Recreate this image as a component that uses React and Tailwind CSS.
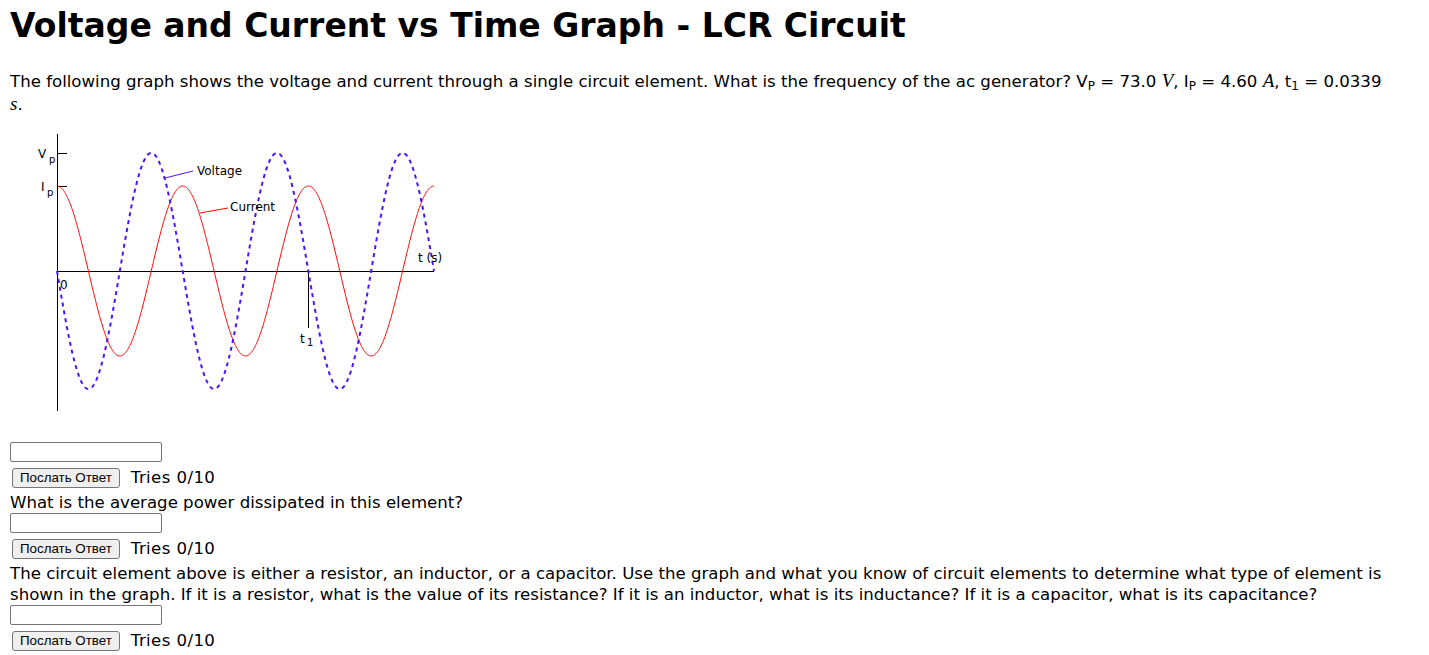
import React from "react";

const T = 125.67;
const X0 = 57;
const Y0 = 270;

function wave(fn, x1, x2) {
  const pts = [];
  for (let x = x1; x <= x2 + 0.01; x += 0.5) {
    pts.push(`${x.toFixed(1)},${fn(x).toFixed(2)}`);
  }
  return "M" + pts.join(" L");
}

const current = wave((x) => Y0 - 85 * Math.cos((2 * Math.PI * (x - X0)) / T), X0, 434);
const voltage = wave((x) => Y0 + 118 * Math.sin((2 * Math.PI * (x - X0)) / T), X0, 434);

function Graph() {
  return (
    <svg width="420" height="290" className="block ml-[20px] mt-[10px]" style={{ fontFamily: "'DejaVu Sans', sans-serif" }}>
      <g transform="translate(-30,-125)">
        {/* axes */}
        <g stroke="#000" strokeWidth="1" shapeRendering="crispEdges">
          <line x1="57.5" y1="133" x2="57.5" y2="410" />
          <line x1="57" y1="270.5" x2="434" y2="270.5" />
          <line x1="57" y1="152.5" x2="67" y2="152.5" />
          <line x1="57" y1="185.5" x2="67" y2="185.5" />
          <line x1="308.5" y1="270" x2="308.5" y2="327" />
        </g>

        {/* curves */}
        <path d={current} fill="none" stroke="#ff0000" strokeWidth="1" />
        <path d={voltage} fill="none" stroke="#4a14ff" strokeWidth="2" strokeDasharray="4 4" />

        {/* leaders */}
        <line x1="165" y1="177" x2="193" y2="170" stroke="#4a14ff" strokeWidth="1" />
        <line x1="200" y1="212" x2="228" y2="207" stroke="#ff0000" strokeWidth="1" />

        {/* labels */}
        <text x="197" y="174" fontSize="12" fill="#000">Voltage</text>
        <text x="230" y="210" fontSize="12" fill="#000">Current</text>
        <text x="418" y="261" fontSize="12" fill="#000">t (s)</text>
        <text x="60" y="288" fontSize="12" fill="#000">0</text>
        <text x="38" y="157" fontSize="12" fill="#000">V</text>
        <text x="49" y="162" fontSize="10" fill="#000">p</text>
        <text x="41" y="190" fontSize="12" fill="#000">I</text>
        <text x="47" y="195" fontSize="10" fill="#000">p</text>
        <text x="300" y="342" fontSize="12" fill="#000">t</text>
        <text x="307" y="345" fontSize="10" fill="#000">1</text>
      </g>
    </svg>
  );
}

function Answer() {
  return (
    <div className="flex items-center h-[20px] mt-[6px]">
      <button className="ml-[2px] h-[20px] px-[7px] bg-[#efefef] border border-[#767676] rounded-[3px] text-[13.33px] leading-none text-black" style={{ fontFamily: "'Liberation Sans', Arial, sans-serif" }}>
        Послать Ответ
      </button>
      <span className="ml-[11px] tracking-[0.4px]">Tries 0/10</span>
    </div>
  );
}

function Field({ className = "" }) {
  return <input type="text" className={"block w-[152px] h-[20px] border border-[#767676] rounded-[2px] bg-white " + className} />;
}

const serif = { fontFamily: "'Liberation Serif', serif" };

export default function App() {
  return (
    <div className="px-[10px] pt-[8px] text-[16.6px] text-black bg-white min-h-screen" style={{ fontFamily: "'DejaVu Sans', Verdana, sans-serif" }}>
      <h1 className="text-[33px] font-bold leading-[36px]">Voltage and Current vs Time Graph - LCR Circuit</h1>
      <p className="mt-[26px] leading-[22px]">
        The following graph shows the voltage and current through a single circuit element. What is the frequency of the ac generator? V<sub className="text-[12px]">P</sub> = 73.0{" "}
        <i className="text-[19px]" style={serif}>V</i>, I<sub className="text-[12px]">P</sub> = 4.60{" "}
        <i className="text-[19px]" style={serif}>A</i>, t<sub className="text-[12px]">1</sub> = 0.0339
        <br />
        <i className="text-[19px]" style={serif}>s</i>.
      </p>
      <Graph />
      <Field className="mt-[26px]" />
      <Answer />
      <div className="mt-[4px] leading-[21px]">What is the average power dissipated in this element?</div>
      <Field />
      <Answer />
      <div className="mt-[4px] leading-[21px]">
        The circuit element above is either a resistor, an inductor, or a capacitor. Use the graph and what you know of circuit elements to determine what type of element is shown in the graph. If it is a resistor, what is the value of its resistance? If it is an inductor, what is its inductance? If it is a capacitor, what is its capacitance?
      </div>
      <Field />
      <Answer />
    </div>
  );
}
